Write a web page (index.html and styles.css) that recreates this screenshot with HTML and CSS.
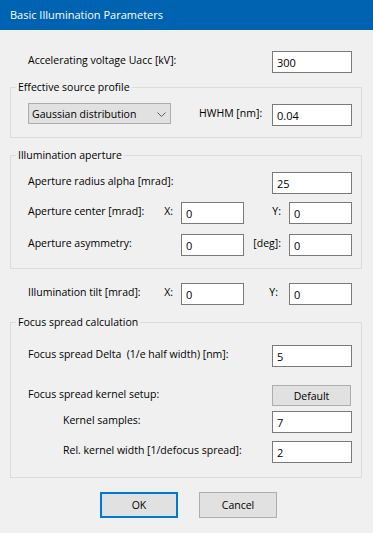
FILE: index.html
```html
<!DOCTYPE html>
<html>
<head>
<meta charset="utf-8">
<link rel="stylesheet" href="styles.css">
</head>
<body>
<div class="titlebar">Basic Illumination Parameters</div>
<div class="content">
  <div class="row top r-acc">
    <span class="lbl grow">Accelerating voltage Uacc [kV]:</span>
    <input class="input w80" type="text" value="300">
  </div>

  <div class="group g1">
    <div class="legend">Effective source profile</div>
    <div class="row r-src">
      <div class="combo">
        <span class="combo-text">Gaussian distribution</span>
        <svg class="chev" width="9" height="5" viewBox="0 0 9 5"><polyline points="0.5,0.5 4.5,4.5 8.5,0.5" fill="none" stroke="#606060" stroke-width="1"/></svg>
      </div>
      <span class="lbl grow hwhm">HWHM [nm]:</span>
      <input class="input w80" type="text" value="0.04">
    </div>
  </div>

  <div class="group g2">
    <div class="legend">Illumination aperture</div>
    <div class="row r-a1">
      <span class="lbl grow">Aperture radius alpha [mrad]:</span>
      <input class="input w80" type="text" value="25">
    </div>
    <div class="row r-a2">
      <span class="lbl grow">Aperture center [mrad]:</span>
      <span class="lbl xlbl">X:</span>
      <input class="input w63" type="text" value="0">
      <span class="lbl ylbl">Y:</span>
      <input class="input w63" type="text" value="0">
    </div>
    <div class="row r-a3">
      <span class="lbl grow">Aperture asymmetry:</span>
      <input class="input w63" type="text" value="0">
      <span class="lbl ylbl">[deg]:</span>
      <input class="input w63" type="text" value="0">
    </div>
  </div>

  <div class="row top r-tilt">
    <span class="lbl grow">Illumination tilt [mrad]:</span>
    <span class="lbl xlbl">X:</span>
    <input class="input w63" type="text" value="0">
    <span class="lbl ylbl ytilt">Y:</span>
    <input class="input w63" type="text" value="0">
  </div>

  <div class="group g3">
    <div class="legend">Focus spread calculation</div>
    <div class="row r-f1">
      <span class="lbl grow">Focus spread Delta&nbsp; (1/e half width) [nm]:</span>
      <input class="input w80" type="text" value="5">
    </div>
    <div class="row r-f2">
      <span class="lbl grow">Focus spread kernel setup:</span>
      <button class="btn default" type="button">Default</button>
    </div>
    <div class="row r-f3 indent">
      <span class="lbl grow">Kernel samples:</span>
      <input class="input w80" type="text" value="7">
    </div>
    <div class="row r-f4 indent">
      <span class="lbl grow">Rel. kernel width [1/defocus spread]:</span>
      <input class="input w80" type="text" value="2">
    </div>
  </div>

  <div class="btnrow">
    <button class="btn dlg ok" type="button">OK</button>
    <button class="btn dlg" type="button">Cancel</button>
  </div>
</div>
</body>
</html>
```

FILE: styles.css
```css
html, body {
  margin: 0;
  padding: 0;
}
body {
  width: 373px;
  height: 533px;
  overflow: hidden;
  background: #f0f0f0;
  font-family: "Segoe UI", "Open Sans", sans-serif;
  font-size: 10.5px;
  color: #000;
}
.titlebar {
  box-sizing: border-box;
  height: 30px;
  background: #0063b1;
  color: #fff;
  font-size: 11px;
  line-height: 30px;
  padding-left: 10px;
}
.content {
  padding: 0 11px 0 10px;
}
.row {
  display: flex;
  align-items: flex-start;
  height: 22px;
}
.top {
  padding: 0 10px 0 18px;
}
.group .row {
  padding: 0 9px 0 17px;
}
.group .row.indent {
  padding-left: 52px;
}
.lbl {
  line-height: 18px;
  white-space: nowrap;
}
.grow {
  flex: 1;
  min-width: 0;
}
.xlbl {
  width: 40px;
  box-sizing: border-box;
  text-align: right;
  padding-right: 8px;
}
.ylbl {
  width: 45px;
  box-sizing: border-box;
  text-align: right;
  padding-right: 8px;
}
.ytilt {
  padding-right: 11px;
}
.input {
  box-sizing: border-box;
  height: 22px;
  margin: 0;
  border: 1px solid #7a7a7a;
  border-radius: 0;
  background: #fff;
  font: inherit;
  font-size: 11px;
  color: #000;
  padding: 0 0 0 4px;
  outline: none;
}
.w80 { width: 80px; }
.w63 { width: 63px; }

.group {
  border: 1px solid #dcdcdc;
}
.legend {
  display: table;
  line-height: 14px;
  margin: -8px 0 0 5px;
  padding: 0 2px;
  background: #f0f0f0;
}

.combo {
  box-sizing: border-box;
  display: flex;
  align-items: center;
  width: 143px;
  height: 21px;
  margin-top: -1px;
  border: 1px solid #adadad;
  background: #e1e1e1;
  padding: 0 4px 0 3px;
}
.combo-text {
  flex: 1;
  white-space: nowrap;
  line-height: 18px;
}
.chev {
  display: block;
  margin-top: 1px;
}
.hwhm {
  margin-left: 28px;
}

.btn {
  box-sizing: border-box;
  margin: 0;
  padding: 0;
  border: 1px solid #adadad;
  border-radius: 0;
  background: #e1e1e1;
  font: inherit;
  color: #000;
}
.default {
  width: 79px;
  height: 21px;
  margin-right: 1px;
}
.dlg {
  width: 78px;
  height: 26px;
}
.ok {
  border: 2px solid #0078d7;
}

/* vertical rhythm */
.r-acc { margin-top: 21px; }
.g1 { margin-top: 14px; padding-bottom: 11px; }
.r-src { margin-top: 10px; }
.g2 { margin-top: 17px; padding-bottom: 12px; }
.r-a1 { margin-top: 10px; }
.r-a2 { margin-top: 8px; }
.r-a3 { margin-top: 10px; }
.r-tilt { margin-top: 14px; }
.g3 { margin-top: 17px; padding-bottom: 14px; }
.r-f1 { margin-top: 16px; }
.r-f2 { margin-top: 18px; height: 21px; }
.r-f3 { margin-top: 5px; }
.r-f4 { margin-top: 8px; }

.btnrow {
  display: flex;
  gap: 21px;
  margin-top: 14px;
  padding-left: 90px;
}
```
